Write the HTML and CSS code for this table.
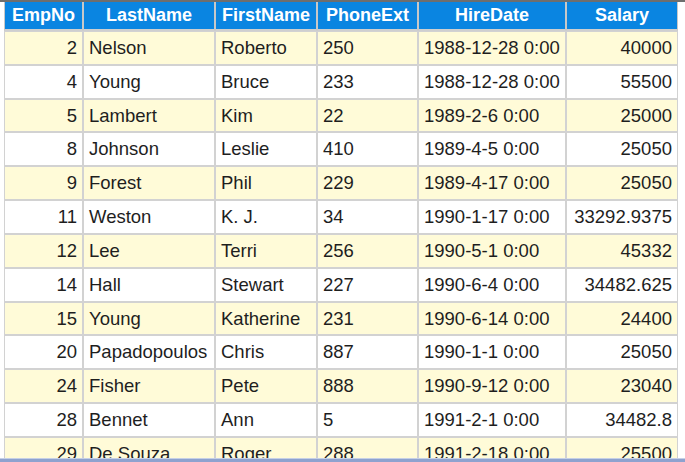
FILE: index.html
```html
<!DOCTYPE html>
<html>
<head>
<meta charset="utf-8">
<link rel="stylesheet" href="styles.css">
</head>
<body>
<div class="topline"></div>
<div class="wrap">
<table class="grid">
  <colgroup>
    <col class="c1"><col class="c2"><col class="c3"><col class="c4"><col class="c5"><col class="c6">
  </colgroup>
  <thead>
    <tr><th>EmpNo</th><th>LastName</th><th>FirstName</th><th>PhoneExt</th><th>HireDate</th><th>Salary</th></tr>
  </thead>
  <tbody>
    <tr class="alt"><td class="num">2</td><td>Nelson</td><td>Roberto</td><td>250</td><td>1988-12-28 0:00</td><td class="num">40000</td></tr>
    <tr><td class="num">4</td><td>Young</td><td>Bruce</td><td>233</td><td>1988-12-28 0:00</td><td class="num">55500</td></tr>
    <tr class="alt"><td class="num">5</td><td>Lambert</td><td>Kim</td><td>22</td><td>1989-2-6 0:00</td><td class="num">25000</td></tr>
    <tr><td class="num">8</td><td>Johnson</td><td>Leslie</td><td>410</td><td>1989-4-5 0:00</td><td class="num">25050</td></tr>
    <tr class="alt"><td class="num">9</td><td>Forest</td><td>Phil</td><td>229</td><td>1989-4-17 0:00</td><td class="num">25050</td></tr>
    <tr><td class="num">11</td><td>Weston</td><td>K. J.</td><td>34</td><td>1990-1-17 0:00</td><td class="num">33292.9375</td></tr>
    <tr class="alt"><td class="num">12</td><td>Lee</td><td>Terri</td><td>256</td><td>1990-5-1 0:00</td><td class="num">45332</td></tr>
    <tr><td class="num">14</td><td>Hall</td><td>Stewart</td><td>227</td><td>1990-6-4 0:00</td><td class="num">34482.625</td></tr>
    <tr class="alt"><td class="num">15</td><td>Young</td><td>Katherine</td><td>231</td><td>1990-6-14 0:00</td><td class="num">24400</td></tr>
    <tr><td class="num">20</td><td>Papadopoulos</td><td>Chris</td><td>887</td><td>1990-1-1 0:00</td><td class="num">25050</td></tr>
    <tr class="alt"><td class="num">24</td><td>Fisher</td><td>Pete</td><td>888</td><td>1990-9-12 0:00</td><td class="num">23040</td></tr>
    <tr><td class="num">28</td><td>Bennet</td><td>Ann</td><td>5</td><td>1991-2-1 0:00</td><td class="num">34482.8</td></tr>
    <tr class="alt"><td class="num">29</td><td>De Souza</td><td>Roger</td><td>288</td><td>1991-2-18 0:00</td><td class="num">25500</td></tr>
  </tbody>
</table>
</div>
<div class="bottombar"></div>
</body>
</html>
```

FILE: styles.css
```css
html, body {
  margin: 0;
  padding: 0;
  background: #ffffff;
  overflow: hidden;
  height: 462px;
}
body {
  font-family: "Liberation Sans", Arial, sans-serif;
  color: #1e1e1e;
}
.topline {
  height: 2px;
  background: #6e6e6e;
}
.wrap {
  padding-left: 4px;
}
.grid {
  table-layout: fixed;
  border-collapse: separate;
  border-spacing: 0;
  width: 674px;
  background: #ffffff;
}
.c1 { width: 79px; }
.c2 { width: 132px; }
.c3 { width: 102px; }
.c4 { width: 101px; }
.c5 { width: 148px; }
.c6 { width: 112px; }
.grid th {
  background: #0a85e1;
  color: #ffffff;
  font-weight: bold;
  font-size: 18px;
  height: 27px;
  padding: 0;
  text-align: center;
  border: 1px solid #c8c8c8;
  border-top: none;
  border-bottom: 2px solid #cfcfcf;
}
.grid td {
  font-size: 18.5px;
  height: 31.83px;
  padding: 0 5px;
  border: 1px solid #d2d2d2;
  white-space: nowrap;
  overflow: hidden;
}
.grid tr.alt td {
  background: #fffbd8;
}
.grid td.num {
  text-align: right;
}
.bottombar {
  position: absolute;
  left: 0;
  right: 0;
  bottom: 0;
  height: 3px;
  background: #8ea2cf;
  border-top: 1px solid #c6d0e6;
}
```
